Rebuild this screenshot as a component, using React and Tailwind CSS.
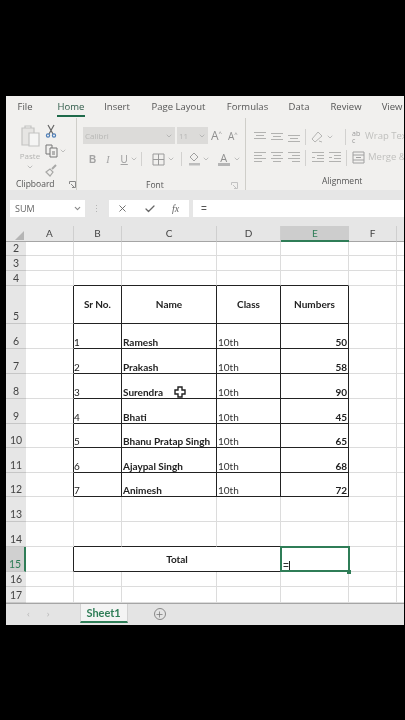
import React from "react";
import { Check, ChevronDown, Plus, X } from "lucide-react";

const gridCols = "grid grid-cols-[20px_48px_48px_95px_64px_68px_48px_7px]";
const uiFont = "font-['Open_Sans',sans-serif]";
const cellFont = "font-['Lato',sans-serif]";

const tabs = [
  { label: "File", width: "w-[14px]", gap: "mr-[25px]" },
  { label: "Home", width: "w-[28px]", gap: "mr-[20px]" },
  { label: "Insert", width: "w-[24px]", gap: "mr-[23px]" },
  { label: "Page Layout", width: "w-[53px]", gap: "mr-[23px]" },
  { label: "Formulas", width: "w-[39px]", gap: "mr-[22px]" },
  { label: "Data", width: "w-[20px]", gap: "mr-[22px]" },
  { label: "Review", width: "w-[30px]", gap: "mr-[21px]" },
  { label: "View", width: "w-[20px]", gap: "" },
];

const people = [
  { row: 6, h: "h-[25px]", sr: "1", name: "Ramesh", num: "50" },
  { row: 7, h: "h-[25px]", sr: "2", name: "Prakash", num: "58" },
  { row: 8, h: "h-[25px]", sr: "3", name: "Surendra", num: "90", cursor: true },
  { row: 9, h: "h-[25px]", sr: "4", name: "Bhati", num: "45" },
  { row: 10, h: "h-[24px]", sr: "5", name: "Bhanu Pratap Singh", num: "65" },
  { row: 11, h: "h-[25px]", sr: "6", name: "Ajaypal Singh", num: "68" },
  { row: 12, h: "h-[24px]", sr: "7", name: "Animesh", num: "72" },
];

const Lines = ({ widths, className = "" }) => (
  <svg width="14" height="13" viewBox="0 0 14 13" className={className}>
    {widths.map((line, i) => (
      <rect key={i} x={line[0]} y={line[1]} width={line[2]} height="1" fill="#b2b2b0" />
    ))}
  </svg>
);

const Sep = ({ h = "h-[16px]" }) => <div className={`w-px ${h} bg-[#d2d1cf]`} />;

const Chevron = ({ className = "" }) => (
  <ChevronDown size={8} strokeWidth={2} className={`text-[#a5a5a5] ${className}`} />
);

const Launcher = ({ color, className }) => (
  <svg width="7" height="7" viewBox="0 0 7 7" fill="none" stroke={color} className={className}>
    <path d="M0.5 3V0.5H6.5V6.5H3M2 3l3 3" />
  </svg>
);

const Clipboard = () => (
  <div className="flex w-[71px] h-full shrink-0 flex-col border-r border-[#cfcec9]">
    <div className="flex h-[61px] pl-[11px] pt-[6px]">
      <div className="flex w-[26px] flex-col items-center">
        <svg width="22" height="24" viewBox="0 0 22 24" fill="none" stroke="#c4c4c2" strokeWidth="1.2">
          <path d="M3 4h12v17H3z" fill="#e6e5e3" />
          <path d="M6 4V2h6v2" />
          <path d="M10 9h10v13H10z" fill="#f5f5f4" />
        </svg>
        <span className={`${uiFont} mt-[3px] text-[8px] leading-[10px] text-[#b4b4b2]`}>Paste</span>
        <Chevron className="mt-[2px]" />
      </div>
      <div className="ml-[2px] flex flex-col gap-[6px]">
        <svg width="12" height="14" viewBox="0 0 12 14" fill="none" stroke="#666" strokeWidth="1.2">
          <path d="M3 1l5 9M9 1L4 10" />
          <circle cx="3" cy="11.5" r="1.6" stroke="#4f7fb8" />
          <circle cx="9" cy="11.5" r="1.6" stroke="#4f7fb8" />
        </svg>
        <div className="flex items-center">
          <svg width="13" height="14" viewBox="0 0 13 14" fill="none" stroke="#777" strokeWidth="1">
            <path d="M1 1h6v9H1z" />
            <path d="M5 4h7v9H5z" fill="#f1f0ee" />
            <path d="M7 8h3M7 10h3" />
          </svg>
          <Chevron className="ml-[1px]" />
        </div>
        <svg width="13" height="13" viewBox="0 0 13 13" fill="none" stroke="#a8a8a6" strokeWidth="1.2">
          <path d="M1 8l4-3 3 3-3 4z" />
          <path d="M7 5l4-4" strokeWidth="2" />
        </svg>
      </div>
    </div>
    <div className="flex items-center pl-[10px]">
      <span className={`${uiFont} text-[8.5px] leading-[10px] text-[#555]`}>Clipboard</span>
      <Launcher color="#888" className="ml-[14px]" />
    </div>
  </div>
);

const FontGroup = () => (
  <div className="flex w-[169px] h-full shrink-0 flex-col border-r border-[#cfcec9] pt-[9px]">
    <div className="flex h-[17px] items-center pl-[6px]">
      <div className={`${uiFont} flex h-[17px] w-[92px] items-center justify-between bg-[#dcdbd9] pl-[2px] pr-[2px] text-[8px] text-[#b8b8b6]`}>
        Calibri
        <Chevron />
      </div>
      <div className={`${uiFont} ml-[2px] flex h-[17px] w-[31px] items-center justify-between bg-[#dcdbd9] pl-[2px] pr-[2px] text-[8px] text-[#b8b8b6]`}>
        11
        <Chevron />
      </div>
      <span className={`${uiFont} ml-[3px] text-[12px] leading-none text-[#8f8f8f]`}>A</span>
      <span className="mb-[5px] text-[6px] leading-none text-[#8f8f8f]">^</span>
      <span className={`${uiFont} ml-[6px] text-[10px] leading-none text-[#8f8f8f]`}>A</span>
      <span className="mb-[4px] text-[6px] leading-none text-[#8f8f8f]">^</span>
    </div>
    <div className="mt-[6px] flex h-[18px] items-center pl-[12px]">
      <span className="font-['Liberation_Sans',sans-serif] text-[10px] font-bold text-[#a3a3a3]">B</span>
      <span className="ml-[10px] font-['Liberation_Serif',serif] text-[10px] italic text-[#a3a3a3]">I</span>
      <span className="ml-[11px] font-['Liberation_Sans',sans-serif] text-[10px] text-[#a3a3a3] underline">U</span>
      <Chevron className="ml-[2px]" />
      <div className="ml-[3px]"><Sep h="h-[14px]" /></div>
      <svg width="13" height="13" viewBox="0 0 13 13" fill="none" stroke="#9a9a9a" className="ml-[10px]">
        <path d="M1 1h11v11H1zM6.5 1v11M1 6.5h11" />
      </svg>
      <Chevron className="ml-[2px]" />
      <div className="ml-[6px]"><Sep h="h-[14px]" /></div>
      <svg width="13" height="14" viewBox="0 0 13 14" fill="none" stroke="#a0a0a0" className="ml-[6px]">
        <path d="M6 1l4 4-4 4-4-4z" />
        <rect x="1" y="11" width="11" height="2.5" fill="#bdbdbd" stroke="none" />
      </svg>
      <Chevron className="ml-[1px]" />
      <div className="ml-[8px] flex w-[12px] flex-col items-center">
        <span className={`${uiFont} text-[11px] leading-[11px] text-[#8f8f8f]`}>A</span>
        <div className="h-[3px] w-[12px] bg-[#b5b5b5]" />
      </div>
      <Chevron className="ml-[3px]" />
    </div>
    <div className="mt-auto flex items-center pl-[69px]">
      <span className={`${uiFont} text-[8.5px] leading-[10px] text-[#555]`}>Font</span>
      <Launcher color="#c2c2c2" className="ml-[67px]" />
    </div>
  </div>
);

const AlignGroup = () => (
  <div className="flex w-[200px] h-full shrink-0 flex-col pt-[10px] pl-[7px]">
    <div className="flex h-[20px] items-center">
      <Lines widths={[[1, 2, 12], [3, 5, 8], [1, 8, 12]]} />
      <Lines className="ml-[3px]" widths={[[1, 3, 12], [3, 6, 8], [1, 9, 12]]} />
      <Lines className="ml-[3px]" widths={[[1, 5, 12], [3, 8, 8], [1, 11, 12]]} />
      <div className="ml-[4px]"><Sep /></div>
      <svg width="14" height="14" viewBox="0 0 14 14" fill="none" stroke="#b5b5b3" className="ml-[4px]">
        <path d="M2 9l6-7 4 4-7 6zM9 11l3 1" />
      </svg>
      <Chevron className="ml-[2px]" />
      <div className="ml-[11px]"><Sep /></div>
      <span className={`${uiFont} ml-[6px] w-[11px] text-[7px] leading-[7px] text-[#9a9a9a]`}>ab c</span>
      <span className={`${uiFont} ml-[2px] whitespace-nowrap text-[9.5px] text-[#c0c0be]`}>Wrap Text</span>
    </div>
    <div className="mt-[4px] flex h-[20px] items-center">
      <Lines widths={[[1, 1, 12], [1, 4, 8], [1, 7, 12], [1, 10, 8]]} />
      <Lines className="ml-[3px]" widths={[[1, 1, 12], [3, 4, 8], [1, 7, 12], [3, 10, 8]]} />
      <Lines className="ml-[3px]" widths={[[1, 1, 12], [5, 4, 8], [1, 7, 12], [5, 10, 8]]} />
      <div className="ml-[4px]"><Sep /></div>
      <Lines className="ml-[5px]" widths={[[1, 1, 12], [6, 4, 7], [1, 6, 3], [6, 7, 7], [1, 10, 12]]} />
      <Lines className="ml-[3px]" widths={[[1, 1, 12], [6, 4, 7], [1, 6, 3], [6, 7, 7], [1, 10, 12]]} />
      <div className="ml-[4px]"><Sep /></div>
      <svg width="13" height="13" viewBox="0 0 13 13" fill="none" stroke="#a0a0a0" className="ml-[5px]">
        <path d="M1 1h11v11H1zM1 4h11M1 9h11M4 6.5h5" />
      </svg>
      <span className={`${uiFont} ml-[3px] whitespace-nowrap text-[9.5px] text-[#c0c0be]`}>Merge &amp; C</span>
    </div>
    <div className="mt-auto pl-[69px]">
      <span className={`${uiFont} text-[8.5px] leading-[10px] text-[#555]`}>Alignment</span>
    </div>
  </div>
);

const FormulaBar = () => (
  <div className="flex h-[36px] items-start bg-[#e6e6e6] pt-[10px] pl-[4px]">
    <div className={`${uiFont} flex h-[17px] w-[75px] items-center justify-between bg-white pl-[5px] pr-[3px] text-[9px] text-[#666]`}>
      SUM
      <ChevronDown size={9} strokeWidth={3} className="text-[#888]" />
    </div>
    <div className="ml-[11px] flex h-[17px] w-[2px] flex-col justify-center gap-[2px]">
      <div className="h-px w-px bg-[#b5b5b5]" />
      <div className="h-px w-px bg-[#b5b5b5]" />
      <div className="h-px w-px bg-[#b5b5b5]" />
    </div>
    <div className="ml-[11px] flex h-[17px] w-[80px] items-center bg-white pl-[8px] text-[#666]">
      <X size={11} strokeWidth={2} />
      <Check size={12} strokeWidth={2.5} className="ml-[16px]" />
      <span className="ml-[16px] font-['Liberation_Serif',serif] text-[10px] italic">fx</span>
    </div>
    <div className="ml-[4px] flex h-[17px] flex-1 items-center bg-white pl-[8px] font-['Liberation_Sans',sans-serif] text-[10px] text-[#555]">
      =
    </div>
  </div>
);

const ColHeaders = () => (
  <div className={`${gridCols} h-[16px] bg-[#e6e6e6] ${cellFont} text-[10px] leading-[14px] text-[#444]`}>
    <div className="flex items-end justify-end border-b border-[#a5a5a5] pb-px pr-[2px]">
      <div className="h-0 w-0 border-b-[9px] border-l-[9px] border-b-[#b5b5b5] border-l-transparent" />
    </div>
    {["A", "B", "C", "D"].map((c) => (
      <div key={c} className="border-b border-r border-[#a5a5a5] border-r-[#cfcfcf] text-center">{c}</div>
    ))}
    <div className="border-b-2 border-[#2f7d57] bg-[#cdcdcd] text-center text-[#2f7d57]">E</div>
    <div className="border-b border-r border-[#a5a5a5] border-r-[#cfcfcf] text-center">F</div>
    <div className="border-b border-[#a5a5a5]" />
  </div>
);

const RowNum = ({ n, active }) => (
  <div
    className={`flex items-end justify-center border-b ${cellFont} text-[10.5px] leading-[13px] ${
      active
        ? "border-r-2 border-[#c6c6c6] border-r-[#2f7d57] bg-[#d0d0d0] text-[#2f7d57]"
        : "border-[#c6c6c6] bg-[#e6e6e6] text-[#444]"
    }`}
  >
    {n}
  </div>
);

const Blank = ({ dark }) => (
  <div className={`border-b border-r border-[#dcdcdc] bg-white ${dark ? "border-r-[#222]" : ""}`} />
);

const EmptyRow = ({ n, h, topOfBox, boxFrom }) => {
  // topOfBox darkens the bottom line of the cells the table starts under
  const line = topOfBox ? "border-b-[#222]" : "";
  return (
    <div className={`${gridCols} ${h}`}>
      <RowNum n={n} />
      <Blank />
      <div className={`border-b border-r border-[#dcdcdc] ${line}`} />
      <div className={`border-b border-r border-[#dcdcdc] ${line}`} />
      <div className={`border-b border-r border-[#dcdcdc] ${line}`} />
      <div className={`border-b border-r border-[#dcdcdc] ${boxFrom ? "" : line}`} />
      <Blank />
      <div className="border-b border-[#dcdcdc]" />
    </div>
  );
};

const DataRow = ({ p }) => (
  <div className={`${gridCols} ${p.h}`}>
    <RowNum n={p.row} />
    <Blank dark />
    <div className={`flex items-end border-b border-r border-[#222] text-[10px] leading-[12px] text-[#222] ${cellFont}`}>{p.sr}</div>
    <div className={`flex items-end whitespace-nowrap border-b border-r border-[#222] pl-px text-[10px] font-bold leading-[12px] text-[#222] ${cellFont}`}>
      {p.name}
      {p.cursor && (
        <svg width="12" height="12" viewBox="0 0 12 12" className="ml-[11px]">
          <path d="M4 1h4v3h3v4H8v3H4V8H1V4h3z" fill="white" stroke="#222" strokeWidth="1.4" />
        </svg>
      )}
    </div>
    <div className={`flex items-end border-b border-r border-[#222] pl-px text-[10px] leading-[12px] text-[#333] ${cellFont}`}>10th</div>
    <div className={`flex items-end justify-end border-b border-r border-[#222] pr-px text-[10px] font-bold leading-[12px] text-[#222] ${cellFont}`}>{p.num}</div>
    <Blank />
    <div className="border-b border-[#dcdcdc]" />
  </div>
);

const Sheet = () => (
  <div className="bg-white">
    <EmptyRow n={2} h="h-[14px]" />
    <EmptyRow n={3} h="h-[15px]" />
    <EmptyRow n={4} h="h-[15px]" topOfBox />
    <div className={`${gridCols} h-[38px]`}>
      <RowNum n={5} />
      <Blank dark />
      {["Sr No.", "Name", "Class", "Numbers"].map((t) => (
        <div key={t} className={`flex items-center justify-center border-b border-r border-[#222] text-[10px] font-bold text-[#222] ${cellFont}`}>
          {t}
        </div>
      ))}
      <Blank />
      <div className="border-b border-[#dcdcdc]" />
    </div>
    {people.map((p) => (
      <DataRow key={p.row} p={p} />
    ))}
    <EmptyRow n={13} h="h-[25px]" />
    <EmptyRow n={14} h="h-[25px]" topOfBox boxFrom />
    <div className={`${gridCols} h-[25px]`}>
      <RowNum n={15} active />
      <Blank dark />
      <div className={`col-span-3 flex items-center justify-center border-b border-r border-[#222] text-[10px] font-bold text-[#222] ${cellFont}`}>
        Total
      </div>
      <div className="relative flex items-end pl-[2px] font-['Liberation_Sans',sans-serif] text-[10px] leading-[13px] text-[#333]">
        <div className="absolute inset-x-[-1px] top-[-1px] bottom-0 border-2 border-[#2f7d57]" />
        <div className="absolute bottom-[-2px] right-[-2px] h-[4px] w-[4px] bg-[#2f7d57]" />
        =<span className="mb-[1px] h-[10px] w-px bg-[#222]" />
      </div>
      <Blank />
      <div className="border-b border-[#dcdcdc]" />
    </div>
    <EmptyRow n={16} h="h-[15px]" />
    <EmptyRow n={17} h="h-[16px]" />
  </div>
);

const SheetTabs = () => (
  <div className="flex h-[22px] items-start border-t border-[#a5a5a5] bg-[#e4e4e4]">
    <span className="ml-[21px] mt-[3px] text-[9px] leading-[14px] text-[#bbb]">‹</span>
    <span className="ml-[17px] mt-[3px] text-[9px] leading-[14px] text-[#bbb]">›</span>
    <div className={`${cellFont} ml-[30px] flex h-[19px] w-[48px] items-center justify-center border-x border-b-2 border-[#d2d2d2] border-b-[#2f7d57] bg-[#f4f4f4] pt-px text-[11px] font-bold text-[#2f7d57]`}>
      Sheet1
    </div>
    <div className="ml-[26px] mt-[4px] flex h-[12px] w-[12px] items-center justify-center rounded-full border border-[#888] text-[#777]">
      <Plus size={9} strokeWidth={2} />
    </div>
  </div>
);

export default function App() {
  return (
    <div className="h-[720px] w-[405px] overflow-hidden bg-black pl-[6px] pr-px pt-[96px]">
      <div className="blur-[0.3px]">
        <div className={`${uiFont} flex h-[22px] items-center overflow-hidden whitespace-nowrap bg-[#f1f0ee] pl-[12px] pt-px text-[9.5px] text-[#555]`}>
          {tabs.map((t) => (
            <div key={t.label} className={`relative flex h-full ${t.width} ${t.gap} items-center justify-center`}>
              <span className={t.label === "Home" ? "text-[#2f5a48]" : ""}>{t.label}</span>
              {t.label === "Home" && <div className="absolute bottom-[1px] left-0 h-[2px] w-full bg-[#1f6a4a]" />}
            </div>
          ))}
        </div>
        <div className="flex h-[72px] overflow-hidden bg-[#f1f0ee]">
          <Clipboard />
          <FontGroup />
          <AlignGroup />
        </div>
        <FormulaBar />
        <ColHeaders />
        <Sheet />
        <SheetTabs />
      </div>
    </div>
  );
}
